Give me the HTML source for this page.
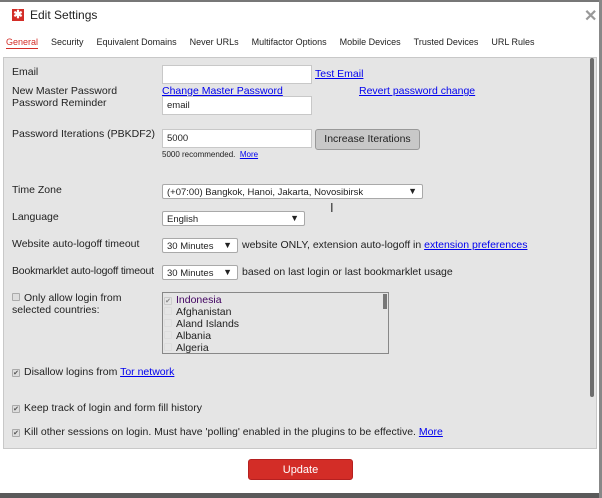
<!DOCTYPE html>
<html><head><style>
*{margin:0;padding:0;box-sizing:border-box}
body{width:602px;height:498px;background:#fff;font-family:"Liberation Sans",Arial,sans-serif;position:relative;overflow:hidden;color:#222}
.a{position:absolute;white-space:nowrap}
.l{font-size:10.5px}
a,.lk{color:#00e;text-decoration:underline}
.in{position:absolute;background:#fff;border:1px solid #c8c8c8}
.sel{position:absolute;background:#fff;border:1px solid #a9a9a9;font-size:9.5px;padding:2px 0 0 4px;border-radius:2px}
.sel b{position:absolute;right:5px;top:1px;font-size:9px}
.cb{display:inline-block;width:8px;height:8px;border:1px solid #aaa;background:#ddd;border-radius:1px;font-size:7px;line-height:7px;text-align:center;color:#555;vertical-align:0;margin-right:4px}
</style></head><body>
<div class="a" style="left:0;top:0;width:602px;height:2px;background:#777"></div>
<div class="a" style="left:12px;top:9px;width:12px;height:12px;background:#d32d27;color:#fff;font-size:11px;line-height:12px;text-align:center;font-weight:bold">✱</div>
<div class="a" style="left:30px;top:8px;font-size:12px;color:#222">Edit Settings</div>
<div class="a" style="left:584px;top:6px;font-size:16px;color:#999;font-weight:bold">✕</div>
<div class="a" style="top:37px;left:6px;font-size:9px;color:#222">
<span style="color:#d32d27;border-bottom:1px solid #d32d27;padding-bottom:1px">General</span><span style="margin-left:13px">Security</span><span style="margin-left:13px">Equivalent Domains</span><span style="margin-left:13px">Never URLs</span><span style="margin-left:13px">Multifactor Options</span><span style="margin-left:13px">Mobile Devices</span><span style="margin-left:13px">Trusted Devices</span><span style="margin-left:13px">URL Rules</span></div>
<div class="a" style="left:3px;top:57px;width:594px;height:392px;background:#e5e5e5;border:1px solid #c8c8c8"></div>
<div class="a" style="left:590px;top:58px;width:4px;height:339px;background:#6d6d6d;border-radius:2px"></div>

<div class="a l" style="left:12px;top:66px">Email</div>
<div class="in" style="left:162px;top:65px;width:150px;height:19px"></div>
<div class="a l lk" style="left:315px;top:68px">Test Email</div>
<div class="a l" style="left:12px;top:85px">New Master Password</div>
<div class="a l lk" style="left:162px;top:85px">Change Master Password</div>
<div class="a l lk" style="left:359px;top:85px">Revert password change</div>
<div class="a l" style="left:12px;top:97px">Password Reminder</div>
<div class="in" style="left:162px;top:96px;width:150px;height:19px;font-size:9.5px;padding:3px 0 0 4px">email</div>
<div class="a l" style="left:12px;top:128px">Password Iterations (PBKDF2)</div>
<div class="in" style="left:162px;top:129px;width:150px;height:19px;font-size:9.5px;padding:3px 0 0 4px">5000</div>
<div class="a" style="left:315px;top:129px;width:105px;height:21px;background:#c8c8c8;border:1px solid #999;border-radius:3px;font-size:10.5px;text-align:center;line-height:19px">Increase Iterations</div>
<div class="a" style="left:162px;top:150px;font-size:8px">5000 recommended. &nbsp;<span class="lk">More</span></div>

<div class="a l" style="left:12px;top:184px">Time Zone</div>
<div class="sel" style="left:162px;top:184px;width:261px;height:15px">(+07:00) Bangkok, Hanoi, Jakarta, Novosibirsk<b>▼</b></div>
<div class="a" style="left:330px;top:200px;font-size:13px;color:#333">I</div>
<div class="a l" style="left:12px;top:211px">Language</div>
<div class="sel" style="left:162px;top:211px;width:143px;height:15px">English<b>▼</b></div>
<div class="a l" style="left:12px;top:238px">Website auto-logoff timeout</div>
<div class="sel" style="left:162px;top:238px;width:76px;height:15px">30 Minutes<b>▼</b></div>
<div class="a l" style="left:242px;top:239px">website ONLY, extension auto-logoff in <span class="lk">extension preferences</span></div>
<div class="a l" style="left:12px;top:265px;letter-spacing:-0.2px">Bookmarklet auto-logoff timeout</div>
<div class="sel" style="left:162px;top:265px;width:76px;height:15px">30 Minutes<b>▼</b></div>
<div class="a l" style="left:242px;top:266px">based on last login or last bookmarklet usage</div>

<div class="a l" style="left:12px;top:292px"><span class="cb"></span>Only allow login from<br>selected countries:</div>
<div class="a" style="left:162px;top:292px;width:227px;height:62px;border:1px solid #888;background:#e5e5e5;overflow:hidden;font-size:10.5px;line-height:12px;padding:1px 0 0 1px">
<div style="color:#400060"><span class="cb" style="border-color:#ccc;background:#e5e5e5;color:#888">✔</span>Indonesia</div>
<div><span class="cb" style="border-color:#ddd;background:#e5e5e5"></span>Afghanistan</div>
<div><span class="cb" style="border-color:#ddd;background:#e5e5e5"></span>Aland Islands</div>
<div><span class="cb" style="border-color:#ddd;background:#e5e5e5"></span>Albania</div>
<div><span class="cb" style="border-color:#ddd;background:#e5e5e5"></span>Algeria</div>
<div style="position:absolute;right:1px;top:1px;width:4px;height:15px;background:#777"></div>
</div>
<div class="a l" style="left:12px;top:366px"><span class="cb">✔</span>Disallow logins from <span class="lk">Tor network</span></div>
<div class="a l" style="left:12px;top:402px"><span class="cb">✔</span>Keep track of login and form fill history</div>
<div class="a l" style="left:12px;top:426px"><span class="cb">✔</span>Kill other sessions on login. Must have 'polling' enabled in the plugins to be effective. <span class="lk">More</span></div>

<div class="a" style="left:248px;top:459px;width:105px;height:21px;background:#d32d27;border:1px solid #b52020;border-radius:3px;color:#fff;font-size:11px;display:flex;align-items:center;justify-content:center">Update</div>
<div class="a" style="left:0;top:493px;width:602px;height:5px;background:#5a5a5a"></div>
<div class="a" style="left:599px;top:0;width:3px;height:498px;background:#888"></div>
</body></html>
